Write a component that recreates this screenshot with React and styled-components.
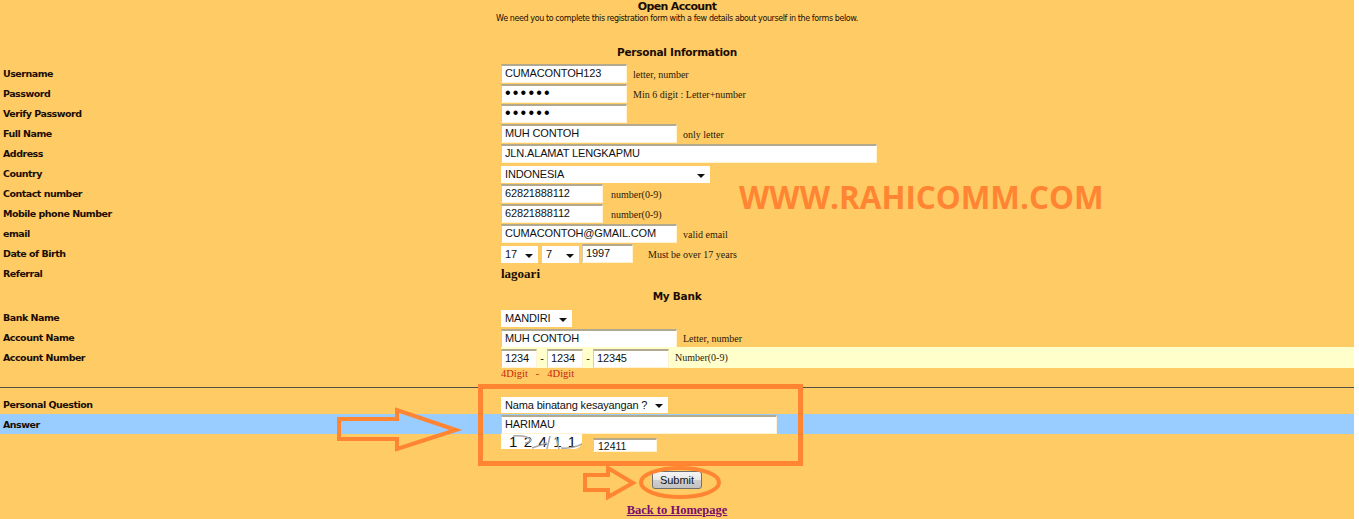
import React from "react";
import styled, { createGlobalStyle } from "styled-components";

const Global = createGlobalStyle`
  html, body { margin: 0; padding: 0; background: #fff; overflow: hidden; }
  #root { width: 1359px; height: 519px; overflow: hidden; }
`;

const Page = styled.div`
  position: relative;
  width: 1359px;
  height: 519px;
  overflow: hidden;
  background: #fff;
  color: #1a0d05;
`;

const Form = styled.div`
  width: 1354px;
  height: 519px;
  display: flex;
  flex-direction: column;
  background: #ffcb65;
`;

const Title = styled.div`
  height: 14px;
  text-align: center;
  font: bold 11px/14px "DejaVu Sans", Verdana, sans-serif;
  letter-spacing: -0.65px;
`;

const Intro = styled.div`
  height: 10px;
  text-align: center;
  font: 8px/10px "DejaVu Sans", Verdana, sans-serif;
  letter-spacing: -0.4px;
`;

const Heading = styled.div`
  height: 20px;
  margin-top: ${p => p.$top}px;
  margin-bottom: 2px;
  text-align: center;
  font: bold 10.5px/20px "DejaVu Sans", Verdana, sans-serif;
  letter-spacing: -0.25px;
`;

const Row = styled.div`
  display: grid;
  grid-template-columns: 501px 1fr;
  align-items: center;
  height: ${p => p.$h || 20}px;
  background: ${p => p.$bg || "transparent"};
`;

const Label = styled.div`
  box-sizing: border-box;
  height: 100%;
  padding-left: 3px;
  padding-top: ${p => p.$pt || 0}px;
  font: bold 9.5px/20px "DejaVu Sans", Verdana, sans-serif;
  letter-spacing: -0.5px;
`;

const Field = styled.div`
  display: flex;
  align-items: ${p => p.$align || "center"};
  height: 100%;
  background: ${p => p.$bg || "transparent"};
`;

const Input = styled.input`
  box-sizing: border-box;
  flex: none;
  width: ${p => p.$w}px;
  height: 19px;
  margin: 0 0 1px;
  padding: 0 0 2px 3px;
  border: 1px solid #fff3d2;
  border-top: 2px solid #b3a98f;
  border-left-color: #d8cdb0;
  border-radius: 0;
  outline: none;
  background: #fff;
  color: #111;
  font: 11px "Liberation Sans", Arial, sans-serif;
  letter-spacing: -0.15px;
`;

const FlushInput = styled(Input)`
  margin: 0;
`;

const Dots = styled(Input)`
  color: #000;
  font-size: 16px;
  letter-spacing: 2.2px;
`;

const CaptchaInput = styled(Input)`
  align-self: flex-start;
  height: 14px;
  margin: 4px 0 0;
  padding: 0 0 0 4px;
  font-size: 10.5px;
  letter-spacing: 0;
`;

const Select = styled.div`
  box-sizing: border-box;
  flex: none;
  display: flex;
  align-items: center;
  justify-content: space-between;
  width: ${p => p.$w}px;
  height: ${p => p.$h || 17}px;
  margin-right: ${p => p.$mr || 0}px;
  padding: 0 5px 0 4px;
  background: #fff;
  color: #111;
  font: 11px "Liberation Sans", Arial, sans-serif;
  letter-spacing: -0.15px;
  white-space: nowrap;
`;

const Caret = styled.span`
  flex: none;
  width: 0;
  height: 0;
  margin-top: 3px;
  border-left: 4px solid transparent;
  border-right: 4px solid transparent;
  border-top: 4px solid #111;
`;

const Hint = styled.span`
  align-self: center;
  margin-left: ${p => p.$ml}px;
  font: 10px "Liberation Serif", "Times New Roman", serif;
  color: #2a1a08;
  white-space: nowrap;
`;

const Referral = styled.span`
  font: bold 13px "Liberation Serif", "Times New Roman", serif;
`;

const Dash = styled.span`
  align-self: center;
  width: 10px;
  text-align: center;
  font: 11px "Liberation Sans", Arial, sans-serif;
`;

const DigitNote = styled.div`
  display: flex;
  gap: 8px;
  font: 10.5px/12px "Liberation Serif", "Times New Roman", serif;
  color: #c8260c;
`;

const Rule = styled.hr`
  flex: none;
  width: 100%;
  height: 1px;
  margin: 7px 0 6px;
  border: 0;
  background: #555045;
`;

const Captcha = styled.div`
  position: relative;
  box-sizing: border-box;
  flex: none;
  width: 81px;
  height: 15px;
  margin-right: 11px;
  padding-left: 8px;
  border-bottom-right-radius: 8px;
  background: #fff;
  color: #111;
  font: 15px/15px "Liberation Sans", Arial, sans-serif;
  letter-spacing: 1.1px;
  white-space: pre;
`;

const CaptchaNoise = styled.svg`
  position: absolute;
  inset: 0;
`;

const SubmitRow = styled.div`
  display: flex;
  justify-content: center;
  margin-top: 19px;
`;

const Submit = styled.button`
  box-sizing: border-box;
  width: 50px;
  height: 18px;
  padding: 0;
  border: 1px solid #707070;
  border-radius: 3px;
  background: linear-gradient(#f4f4f4, #e8e8e8 48%, #cfcfcf 52%, #c2c2c2);
  color: #111;
  font: 11px "Liberation Sans", Arial, sans-serif;
`;

const BackLink = styled.a`
  display: block;
  margin-top: 13px;
  text-align: center;
  font: bold 12.5px/16px "Liberation Serif", "Times New Roman", serif;
  color: #7a0f6b;
  text-decoration: underline;
`;

const Watermark = styled.div`
  position: absolute;
  left: 739px;
  top: 177px;
  font: bold 31.4px/40px "Open Sans", sans-serif;
  color: #ff8533;
  white-space: nowrap;
`;

const Annotations = styled.svg`
  position: absolute;
  inset: 0;
  pointer-events: none;
`;

function F({ label, children, bg, h, pt, fieldBg, align }) {
  return (
    <Row $bg={bg} $h={h}>
      <Label $pt={pt}>{label}</Label>
      <Field $bg={fieldBg} $align={align}>{children}</Field>
    </Row>
  );
}

const Text = ({ w, v }) => <Input readOnly $w={w} value={v} />;
const Flush = ({ w, v }) => <FlushInput readOnly $w={w} value={v} />;
const Secret = () => <Dots readOnly type="password" $w={126} value="123456" />;

export default function App() {
  return (
    <Page>
      <Global />
      <Form>
        <Title>Open Account</Title>
        <Intro>We need you to complete this registration form with a few details about yourself in the forms below.</Intro>
        <Heading $top={18}>Personal Information</Heading>
        <F label="Username"><Text w={126} v="CUMACONTOH123" /><Hint $ml={6}>letter, number</Hint></F>
        <F label="Password"><Secret /><Hint $ml={6}>Min 6 digit : Letter+number</Hint></F>
        <F label="Verify Password"><Secret /></F>
        <F label="Full Name"><Text w={176} v="MUH CONTOH" /><Hint $ml={6}>only letter</Hint></F>
        <F label="Address"><Text w={376} v="JLN.ALAMAT LENGKAPMU" /></F>
        <F label="Country"><Select $w={209}>INDONESIA<Caret /></Select></F>
        <F label="Contact number"><Text w={102} v="62821888112" /><Hint $ml={8}>number(0-9)</Hint></F>
        <F label="Mobile phone Number"><Text w={102} v="62821888112" /><Hint $ml={8}>number(0-9)</Hint></F>
        <F label="email"><Text w={176} v="CUMACONTOH@GMAIL.COM" /><Hint $ml={6}>valid email</Hint></F>
        <F label="Date of Birth">
          <Select $w={37} $mr={4}>17<Caret /></Select>
          <Select $w={37} $mr={3}>7<Caret /></Select>
          <Text w={51} v="1997" />
          <Hint $ml={15}>Must be over 17 years</Hint>
        </F>
        <F label="Referral"><Referral>lagoari</Referral></F>
        <Heading $top={2}>My Bank</Heading>
        <F label="Bank Name"><Select $w={71}>MANDIRI<Caret /></Select></F>
        <F label="Account Name" h={19}><Flush w={176} v="MUH CONTOH" /><Hint $ml={6}>Letter, number</Hint></F>
        <F label="Account Number" fieldBg="#ffffcc" align="flex-end" pt={1}>
          <Flush w={36} v="1234" />
          <Dash>-</Dash>
          <Flush w={36} v="1234" />
          <Dash>-</Dash>
          <Flush w={76} v="12345" />
          <Hint $ml={6}>Number(0-9)</Hint>
        </F>
        <Row $h={13}>
          <span />
          <DigitNote><span>4Digit</span><span>-</span><span>4Digit</span></DigitNote>
        </Row>
        <Rule />
        <F label="Personal Question" pt={1}><Select $w={167} $h={16}>Nama binatang kesayangan ?<Caret /></Select></F>
        <F label="Answer" bg="#99ccff" pt={1}><Flush w={276} v="HARIMAU" /></F>
        <Row $h={18}>
          <span />
          <Field $align="flex-start">
            <Captcha>
              <CaptchaNoise width="81" height="15" viewBox="0 0 81 15">
                <path d="M12 2 Q26 1 30 6 Q27 9 24 9 M31 14 L46 9 M49 2 L46 15 M55 3 L58 15 M60 14 Q72 15 81 10" fill="none" stroke="#a8a8a8" strokeWidth="1.5" />
              </CaptchaNoise>
              1 2 4 1 1
            </Captcha>
            <CaptchaInput readOnly $w={64} value="12411" />
          </Field>
        </Row>
        <SubmitRow><Submit type="button">Submit</Submit></SubmitRow>
        <BackLink href="#">Back to Homepage</BackLink>
      </Form>
      <Watermark>WWW.RAHICOMM.COM</Watermark>
      <Annotations width="1359" height="519" viewBox="0 0 1359 519" fill="none" stroke="#ff8533">
        <rect x="480.5" y="386.5" width="320" height="77" strokeWidth="5" />
        <path d="M339 419 H397 V410 L456 430 L397 449 V439 H339 Z" strokeWidth="4" />
        <path d="M585 475 H608 V468 L633 483 L608 497 V490 H585 Z" strokeWidth="4" />
        <ellipse cx="680" cy="482.5" rx="39" ry="14.5" strokeWidth="4" />
      </Annotations>
    </Page>
  );
}
